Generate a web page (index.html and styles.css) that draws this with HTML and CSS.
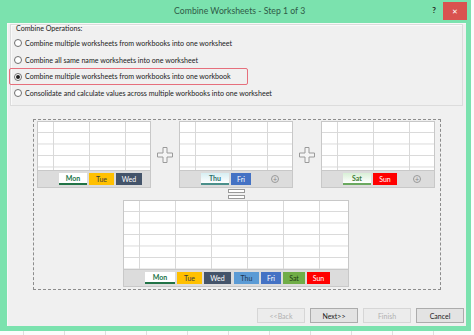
FILE: index.html
```html
<!DOCTYPE html>
<html lang="en">
<head>
  <meta charset="UTF-8">
  <title>Combine Worksheets</title>
  <link rel="stylesheet" href="styles.css">
</head>
<body>
  <div class="window">
    <div class="titlebar">
      <span class="title">Combine Worksheets - Step 1 of 3</span>
      <span class="help">?</span>
      <span class="close">&#x2715;</span>
    </div>

    <div class="content">
      <div class="group">
        <div class="group-label">Combine Operations:</div>
        <div class="option"><span class="radio"></span>Combine multiple worksheets from workbooks into one worksheet</div>
        <div class="option"><span class="radio"></span>Combine all same name worksheets into one worksheet</div>
        <div class="option highlight"><span class="radio checked"></span>Combine multiple worksheets from workbooks into one workbook</div>
        <div class="option"><span class="radio"></span>Consolidate and calculate values across multiple workbooks into one worksheet</div>
      </div>

      <div class="preview">
        <div class="top-row">
          <div class="sheet">
            <div class="grid"></div>
            <div class="tabbar">
              <span class="tab active">Mon</span>
              <span class="tab tue">Tue</span>
              <span class="tab wed">Wed</span>
            </div>
          </div>

          <svg class="plus" width="18" height="18" viewBox="0 0 18 18">
            <path d="M7 1.5h4v5.5h5.5v4h-5.5v5.5h-4v-5.5h-5.5v-4h5.5z" fill="#f4f4f4" stroke="#9a9a9a" stroke-width="1"/>
          </svg>

          <div class="sheet">
            <div class="grid"></div>
            <div class="tabbar">
              <span class="tab active thu-act">Thu</span>
              <span class="tab fri">Fri</span>
              <span class="add">+</span>
            </div>
          </div>

          <svg class="plus" width="18" height="18" viewBox="0 0 18 18">
            <path d="M7 1.5h4v5.5h5.5v4h-5.5v5.5h-4v-5.5h-5.5v-4h5.5z" fill="#f4f4f4" stroke="#9a9a9a" stroke-width="1"/>
          </svg>

          <div class="sheet">
            <div class="grid"></div>
            <div class="tabbar">
              <span class="tab active sat-act">Sat</span>
              <span class="tab sun">Sun</span>
              <span class="add">+</span>
            </div>
          </div>
        </div>

        <div class="equals">
          <span></span>
          <span></span>
        </div>

        <div class="sheet big">
          <div class="grid"></div>
          <div class="tabbar">
            <span class="tab active">Mon</span>
            <span class="tab tue">Tue</span>
            <span class="tab wed">Wed</span>
            <span class="tab thu">Thu</span>
            <span class="tab fri">Fri</span>
            <span class="tab sat">Sat</span>
            <span class="tab sun">Sun</span>
          </div>
        </div>
      </div>

      <div class="buttons">
        <button disabled>&lt;&lt;Back</button>
        <button>Next&gt;&gt;</button>
        <button disabled>Finish</button>
        <button>Cancel</button>
      </div>
    </div>
  </div>
</body>
</html>
```

FILE: styles.css
```css
body {
  margin: 0;
  width: 474px;
  height: 335px;
  overflow: hidden;
  font-family: Lato, 'Open Sans', sans-serif;
  background-color: #fbfbfb;
  background-image: linear-gradient(to right, #dedede 1px, transparent 1px);
  background-size: 41px 100%;
  background-position: 23px 0;
}

.window {
  width: 471px;
  height: 331px;
  box-sizing: border-box;
  background: #7be2ae;
  padding: 0 5px 5px 7px;
  display: flex;
  flex-direction: column;
}

.titlebar {
  height: 23px;
  display: flex;
  align-items: flex-start;
}

.title {
  flex: 1;
  text-align: center;
  font-size: 8.7px;
  line-height: 21px;
  color: #2f5b47;
  padding-left: 40px;
}

.help {
  flex: none;
  font-size: 8px;
  font-weight: bold;
  line-height: 21px;
  color: #222;
  margin-right: 7px;
}

.close {
  flex: none;
  width: 24px;
  height: 18px;
  margin-top: 2px;
  margin-right: -1px;
  background: #d9534f;
  color: #fff;
  font-size: 7px;
  line-height: 18px;
  text-align: center;
}

.content {
  flex: 1;
  background: #f0f0f0;
  border-top: 1px solid #f8f8f8;
  border-left: 1px solid #f8f8f8;
  display: flex;
  flex-direction: column;
}

.group {
  margin: 0 3px 0 2px;
  border: 1px solid #dcdcdc;
  box-shadow: inset 1px 1px 0 #fafafa;
  padding: 0 0 3px 0;
  font-size: 7.1px;
  color: #222;
}

.group-label {
  line-height: 8px;
  padding-left: 5px;
  margin-bottom: 2px;
}

.option {
  height: 16.7px;
  display: flex;
  align-items: center;
  white-space: nowrap;
}

.radio {
  flex: none;
  width: 8px;
  height: 8px;
  border: 1px solid #6e6e6e;
  border-radius: 50%;
  background: #fff;
  margin: 0 3px 0 3px;
  box-sizing: border-box;
  display: flex;
  align-items: center;
  justify-content: center;
}

.radio.checked::after {
  content: '';
  width: 4px;
  height: 4px;
  border-radius: 50%;
  background: #222;
}

.option.highlight {
  width: 239px;
  margin-left: -2px;
  padding-left: 1px;
  box-sizing: border-box;
  border: 1.5px solid #e66f7c;
  border-radius: 2px;
}

.preview {
  margin: 13px 0 0 25px;
  width: 408px;
  height: 171px;
  box-sizing: border-box;
  border: 1px dashed #8c8c8c;
  padding: 1px 5px 0 3px;
  display: flex;
  flex-direction: column;
  align-items: center;
}

.top-row {
  width: 398px;
  display: flex;
  justify-content: space-between;
  align-items: flex-start;
}

.plus {
  margin-top: 25px;
}

.sheet {
  width: 114px;
  height: 67px;
  box-sizing: border-box;
  border: 1px solid #c8c8c8;
  display: flex;
  flex-direction: column;
  background: #fff;
}

.grid {
  flex: 1;
  background-color: #fff;
  background-image:
    linear-gradient(to right, #d9d9d9 1px, transparent 1px),
    linear-gradient(to bottom, #d9d9d9 1px, transparent 1px);
  background-size: 36px 100%, 100% 11.5px;
  background-position: 15px 0, 0 10px;
}

.tabbar {
  height: 16px;
  background: #dcdcdc;
  border-top: 1px solid #c8c8c8;
  display: flex;
  align-items: center;
  padding-left: 21px;
  gap: 2px;
  font-size: 7px;
}

.tab {
  height: 12px;
  line-height: 12px;
  box-sizing: border-box;
  text-align: center;
  color: #333;
}

.sheet .tab:nth-child(1) { width: 28px; }
.sheet .tab:nth-child(2) { width: 25px; }
.sheet .tab:nth-child(3) { width: 26px; }

.tab.active {
  background: #fff;
  color: #217346;
  font-weight: bold;
  border-bottom: 2px solid #217346;
  line-height: 11px;
}

.tab.thu-act {
  background: linear-gradient(#d6eef2, #fff);
  color: #2a6f6a;
  border-bottom-color: #4a8f8a;
}

.tab.sat-act {
  background: linear-gradient(#d8efd6, #fff);
  color: #3f7d35;
  border-bottom-color: #6aa85f;
}

.tab.tue { background: #ffc000; color: #3a3a3a; }
.tab.wed { background: #44546a; color: #fff; }
.tab.thu { background: #5b9bd5; color: #1f3550; }
.tab.fri { background: #4472c4; color: #fff; }
.tab.sat { background: #70ad47; color: #1e3a14; }
.tab.sun { background: #ff0000; color: #fff; }

.sheet .tab.fri { width: 20px; }
.sheet .tab.sun { width: 24px; }

.add {
  width: 8px;
  height: 8px;
  border: 1px solid #9a9a9a;
  border-radius: 50%;
  box-sizing: border-box;
  font-size: 7px;
  line-height: 6px;
  text-align: center;
  color: #888;
  margin-left: auto;
  margin-right: 13px;
}

.equals {
  margin: 1px 0;
  display: flex;
  flex-direction: column;
  gap: 2px;
}

.equals span {
  width: 17px;
  height: 4px;
  box-sizing: border-box;
  border: 1px solid #9a9a9a;
  background: #fff;
}

.sheet.big {
  width: 226px;
  height: 87px;
}

.sheet.big .tab:nth-child(1) { width: 30px; }
.sheet.big .tab:nth-child(2) { width: 25px; }
.sheet.big .tab:nth-child(3) { width: 27px; }
.sheet.big .tab:nth-child(4) { width: 25px; margin-left: 1px; }
.sheet.big .tab:nth-child(5) { width: 20px; }
.sheet.big .tab:nth-child(6) { width: 22px; }
.sheet.big .tab:nth-child(7) { width: 23px; }

.buttons {
  margin-top: auto;
  margin-bottom: 3px;
  display: flex;
  justify-content: flex-end;
  gap: 5px;
  padding-right: 2px;
}

.buttons button {
  width: 48px;
  height: 15px;
  padding: 0;
  font-family: Lato, 'Open Sans', sans-serif;
  font-size: 7px;
  background: #e3e3e3;
  border: 1px solid #acacac;
  color: #222;
}

.buttons button:disabled {
  background: #ececec;
  border-color: #d6d6d6;
  color: #b0b0b0;
}
```
